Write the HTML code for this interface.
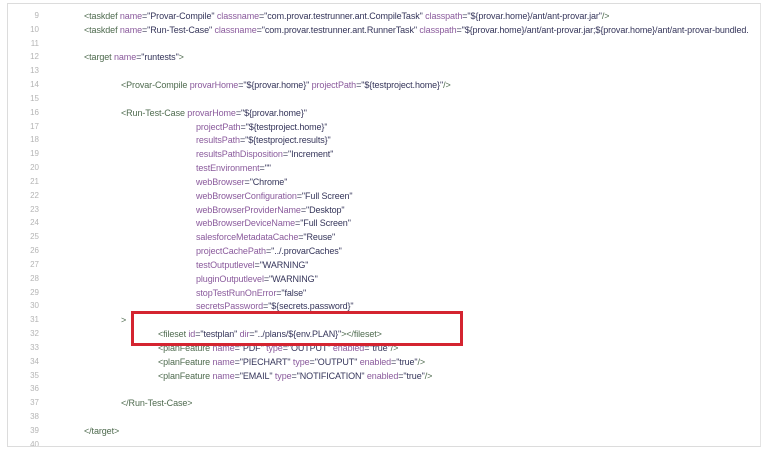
<!DOCTYPE html>
<html><head><meta charset="utf-8"><style>
body{margin:0;width:768px;height:450px;background:#fff;overflow:hidden;position:relative;font-family:"Liberation Sans",sans-serif}
.box{position:absolute;left:7px;top:3px;width:752px;height:442px;border:1px solid #dcdcdc;border-right-color:#e4e4e4;overflow:hidden}
.l{position:absolute;left:0;height:14px;white-space:pre;font-size:9px;line-height:14px;color:#3d3d5a;letter-spacing:-0.1px;overflow:hidden}
.n{position:absolute;width:30px;text-align:right;color:#b5b5b5;font-size:8px;line-height:14px}
.t{color:#4f6b4f}.a{color:#8a5a9c}.v{color:#35355a}
.red{position:absolute;left:131px;top:311px;width:326px;height:29px;border:3px solid #d42430}
</style></head><body>
<div class="box" id="b"></div>
<div class="red"></div>
<script>
var L=[
[9,76,'<span class="t">&lt;taskdef</span> <span class="a">name</span>=<span class="v">"Provar-Compile"</span> <span class="a">classname</span>=<span class="v">"com.provar.testrunner.ant.CompileTask"</span> <span class="a">classpath</span>=<span class="v">"${provar.home}/ant/ant-provar.jar"</span><span class="t">/&gt;</span>'],
[10,76,'<span class="t">&lt;taskdef</span> <span class="a">name</span>=<span class="v">"Run-Test-Case"</span> <span class="a">classname</span>=<span class="v">"com.provar.testrunner.ant.RunnerTask"</span> <span class="a">classpath</span>=<span class="v">"${provar.home}/ant/ant-provar.jar;${provar.home}/ant/ant-provar-bundled.jar;${provar.home}/ant/ant-provar-sf.jar"</span>'],
[11,0,''],
[12,76,'<span class="t">&lt;target</span> <span class="a">name</span>=<span class="v">"runtests"</span><span class="t">&gt;</span>'],
[13,0,''],
[14,113,'<span class="t">&lt;Provar-Compile</span> <span class="a">provarHome</span>=<span class="v">"${provar.home}"</span> <span class="a">projectPath</span>=<span class="v">"${testproject.home}"</span><span class="t">/&gt;</span>'],
[15,0,''],
[16,113,'<span class="t">&lt;Run-Test-Case</span> <span class="a">provarHome</span>=<span class="v">"${provar.home}"</span>'],
[17,188,'<span class="a">projectPath</span>=<span class="v">"${testproject.home}"</span>'],
[18,188,'<span class="a">resultsPath</span>=<span class="v">"${testproject.results}"</span>'],
[19,188,'<span class="a">resultsPathDisposition</span>=<span class="v">"Increment"</span>'],
[20,188,'<span class="a">testEnvironment</span>=<span class="v">""</span>'],
[21,188,'<span class="a">webBrowser</span>=<span class="v">"Chrome"</span>'],
[22,188,'<span class="a">webBrowserConfiguration</span>=<span class="v">"Full Screen"</span>'],
[23,188,'<span class="a">webBrowserProviderName</span>=<span class="v">"Desktop"</span>'],
[24,188,'<span class="a">webBrowserDeviceName</span>=<span class="v">"Full Screen"</span>'],
[25,188,'<span class="a">salesforceMetadataCache</span>=<span class="v">"Reuse"</span>'],
[26,188,'<span class="a">projectCachePath</span>=<span class="v">"../.provarCaches"</span>'],
[27,188,'<span class="a">testOutputlevel</span>=<span class="v">"WARNING"</span>'],
[28,188,'<span class="a">pluginOutputlevel</span>=<span class="v">"WARNING"</span>'],
[29,188,'<span class="a">stopTestRunOnError</span>=<span class="v">"false"</span>'],
[30,188,'<span class="a">secretsPassword</span>=<span class="v">"${secrets.password}"</span>'],
[31,113,'<span class="t">&gt;</span>'],
[32,150,'<span class="t">&lt;fileset</span> <span class="a">id</span>=<span class="v">"testplan"</span> <span class="a">dir</span>=<span class="v">"../plans/${env.PLAN}"</span><span class="t">&gt;&lt;/fileset&gt;</span>'],
[33,150,'<span class="t">&lt;planFeature</span> <span class="a">name</span>=<span class="v">"PDF"</span> <span class="a">type</span>=<span class="v">"OUTPUT"</span> <span class="a">enabled</span>=<span class="v">"true"</span><span class="t">/&gt;</span>'],
[34,150,'<span class="t">&lt;planFeature</span> <span class="a">name</span>=<span class="v">"PIECHART"</span> <span class="a">type</span>=<span class="v">"OUTPUT"</span> <span class="a">enabled</span>=<span class="v">"true"</span><span class="t">/&gt;</span>'],
[35,150,'<span class="t">&lt;planFeature</span> <span class="a">name</span>=<span class="v">"EMAIL"</span> <span class="a">type</span>=<span class="v">"NOTIFICATION"</span> <span class="a">enabled</span>=<span class="v">"true"</span><span class="t">/&gt;</span>'],
[36,0,''],
[37,113,'<span class="t">&lt;/Run-Test-Case&gt;</span>'],
[38,0,''],
[39,76,'<span class="t">&lt;/target&gt;</span>'],
[40,0,'']];
var h='';
L.forEach(function(r,i){var y=5+i*13.83;
h+='<div class="n" style="top:'+y+'px;left:1px">'+r[0]+'</div>';
if(r[2])h+='<div class="l" style="top:'+y+'px;left:'+r[1]+'px;max-width:'+(740-r[1])+'px">'+r[2]+'</div>';});
document.getElementById('b').innerHTML=h;
</script>
</body></html>
